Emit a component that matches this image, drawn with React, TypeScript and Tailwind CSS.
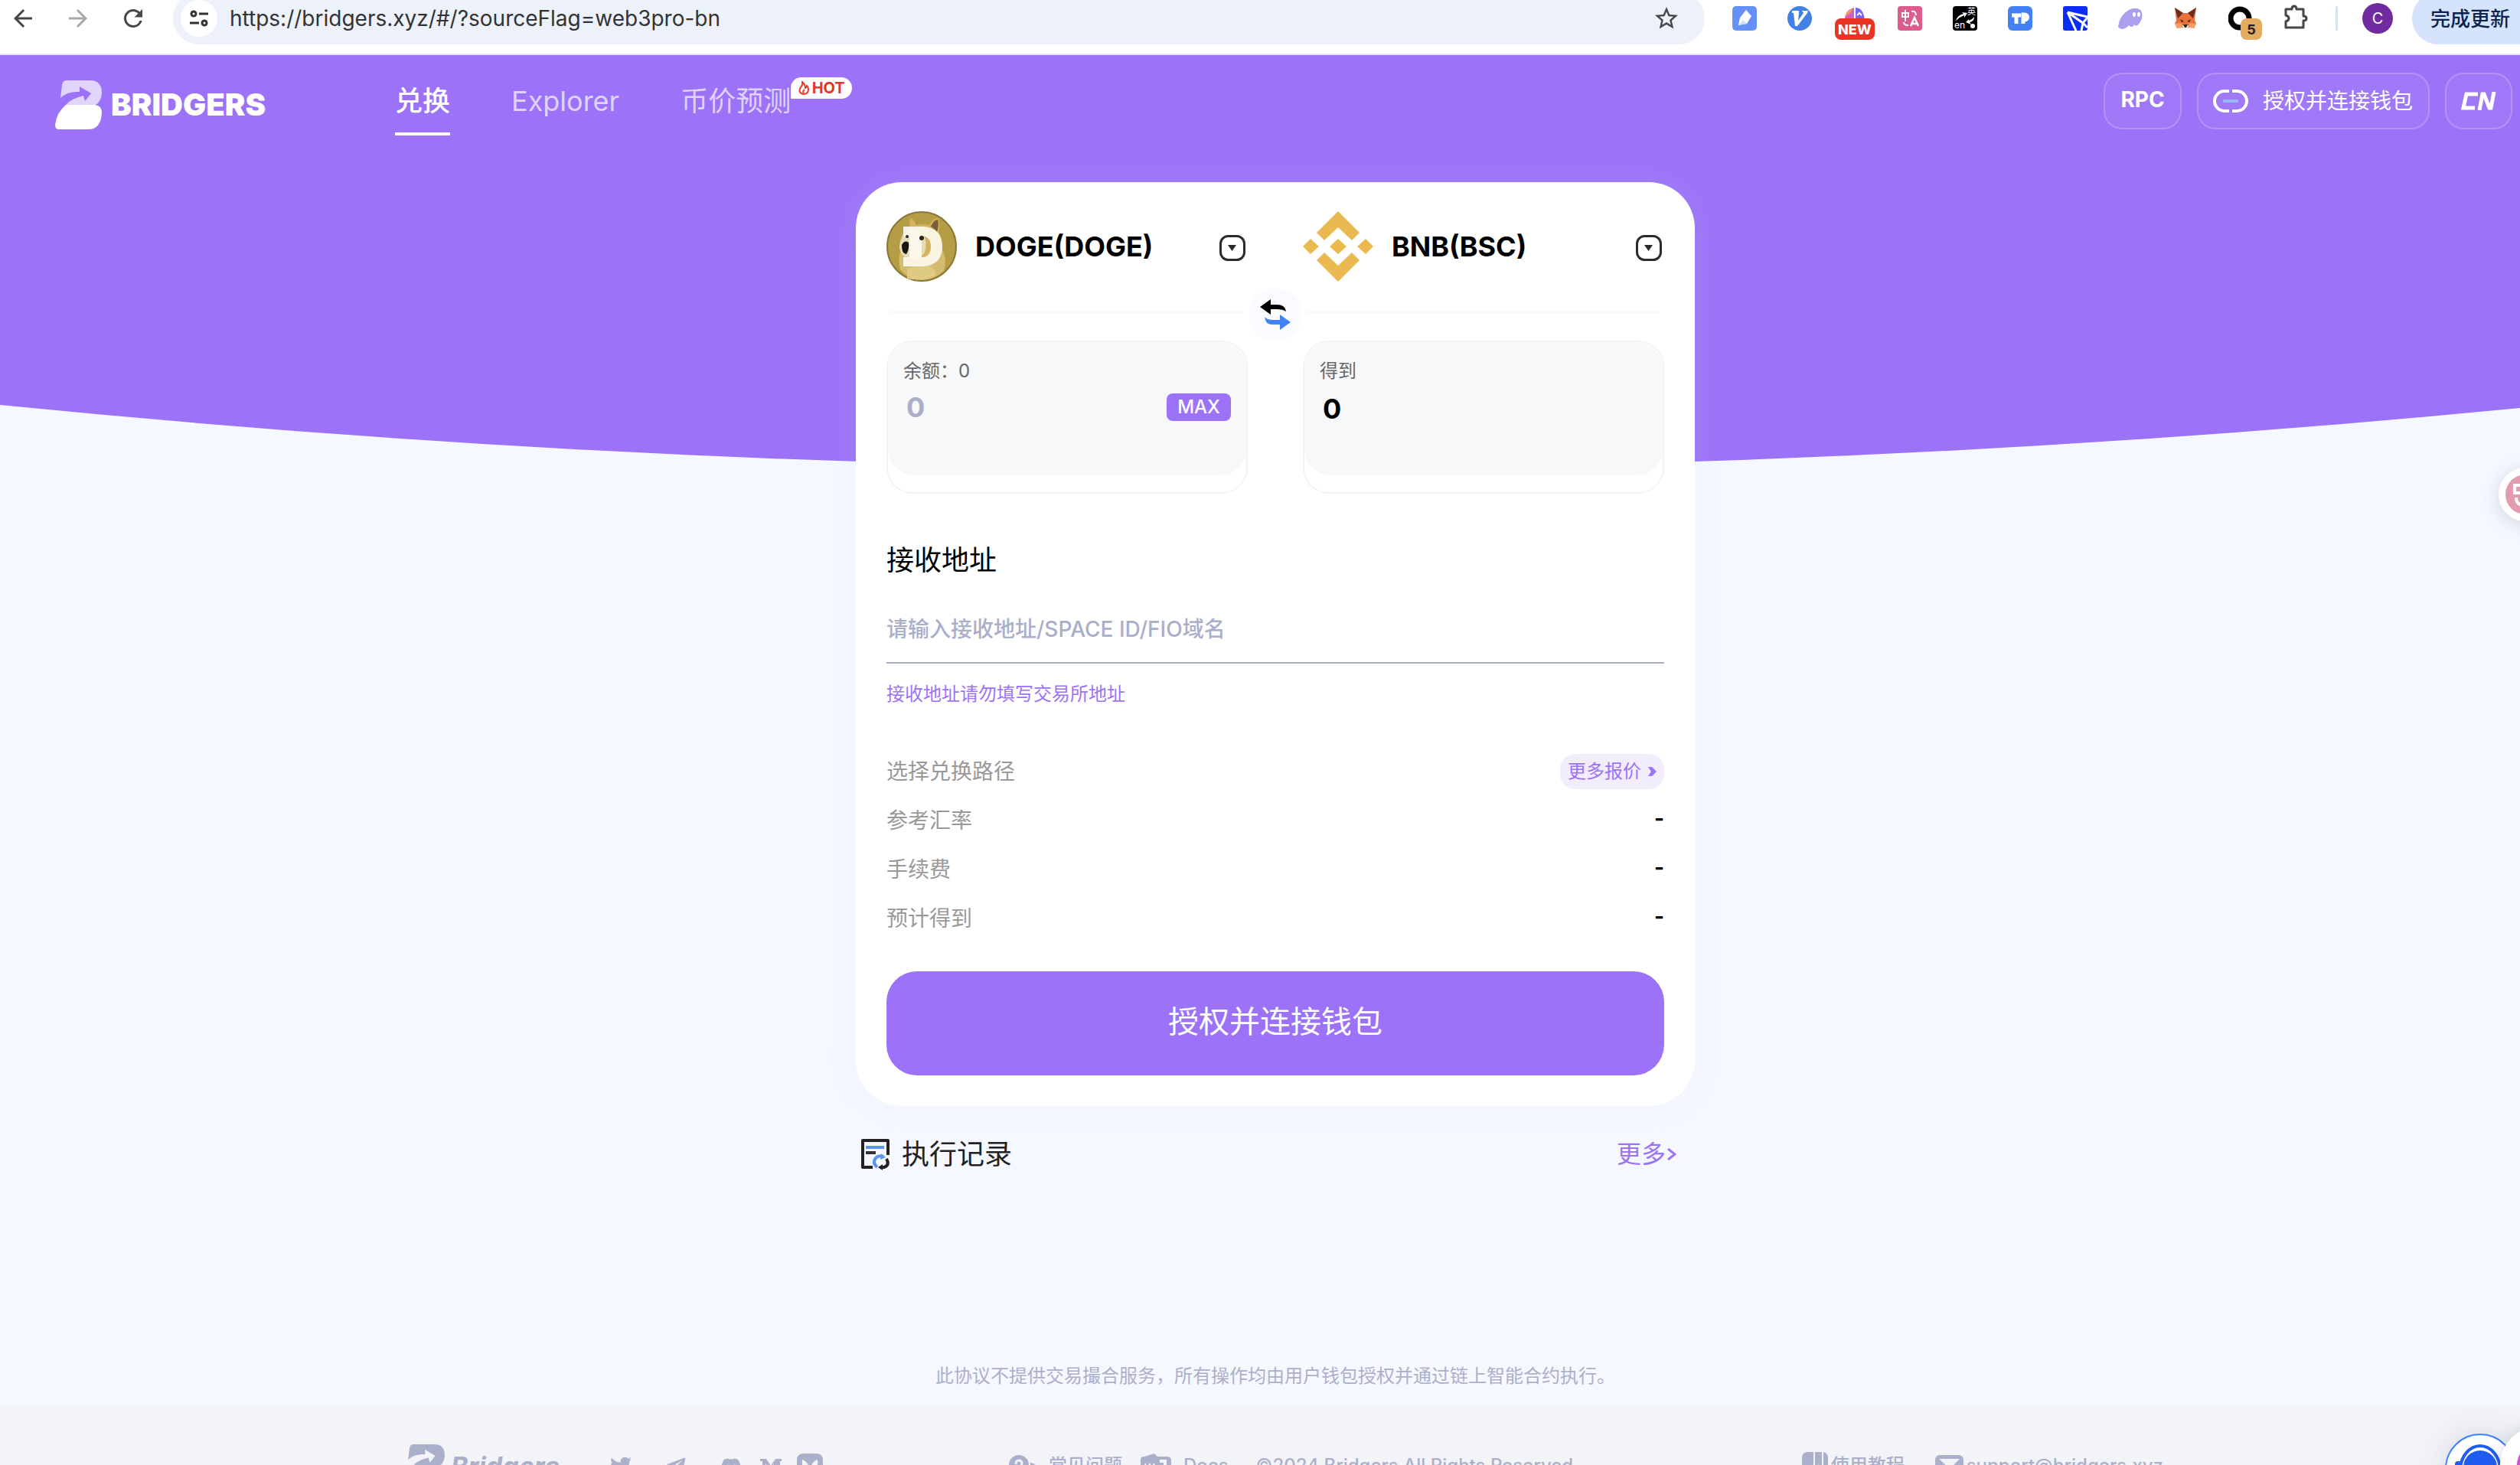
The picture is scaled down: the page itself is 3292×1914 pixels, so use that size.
import React from 'react';
import { MdArrowBack, MdArrowForward, MdRefresh, MdStarBorder } from 'react-icons/md';
import { FaTwitter, FaTelegramPlane } from 'react-icons/fa';
import { FaDiscord } from 'react-icons/fa6';

const BrandMark: React.FC<{ className?: string; topOpacity?: number }> = ({ className, topOpacity = 1 }) => (
    <svg viewBox="0 0 61 64" className={className} fill="currentColor" preserveAspectRatio="none" aria-hidden="true">
        <path
            opacity={topOpacity}
            d="M15 0H46Q61 0 61 17Q60 28 53 32H14Q20 24 37 20L39 27L47 17L32 8V15Q16 14 7 23L9 6Q10 0 15 0Z"
        />
        <path d="M14 32H52Q61 33 61 42Q60 64 43 64H5Q0 64 0 58Q2 42 14 32Z" />
    </svg>
);

const DogeIcon = () => (
    <svg viewBox="0 0 92 92" className="size-[92px]" aria-hidden="true">
        <circle cx="46" cy="46" r="45" fill="#b59d45" stroke="#8a7838" strokeWidth="2" />
        <path d="M18 76Q14 60 20 50L72 48Q80 62 75 78Q62 90 46 90Q30 90 18 76Z" fill="#d3bc70" />
        <path d="M27 88V76Q34 74 40 62L56 70Q66 78 64 84Q50 92 27 88Z" fill="#dfca84" />
        <path d="M17 46Q18 28 30 20L31 9Q36 10 39 18Q48 16 56 18Q60 10 67 9Q71 16 68 28Q76 44 70 58Q60 72 40 68Q18 66 17 46Z" fill="#d6b25f" />
        <path d="M58 20Q62 11 67 11Q69 18 66 27Q62 22 58 20Z" fill="#7a5f3a" />
        <path d="M17 46Q18 32 30 24Q40 22 48 30Q54 40 50 54Q42 64 30 62Q18 60 17 46Z" fill="#e6dbb8" />
        <path
            fillRule="evenodd"
            d="M22 20H48Q73 22 73 46Q73 70 48 72H22V60H30V33H22ZM46 32V60Q58 60 58 46Q58 33 46 32Z"
            fill="#fdfaf0"
            fillOpacity="0.9"
        />
        <path d="M20 44Q24 37 29 41Q30 50 26 56Q20 56 20 44Z" fill="#17150f" />
        <circle cx="46" cy="35" r="3" fill="#2b2618" />
        <circle cx="27" cy="33" r="2" fill="#2b2618" />
    </svg>
);

const BnbIcon = () => (
    <svg viewBox="0 0 92 92" className="size-[92px]" fill="#eaba50" aria-hidden="true">
        <path d="M46 0L74 28L64 38L46 21L28 38L18 28Z" />
        <path d="M46 92L74 64L64 54L46 71L28 54L18 64Z" />
        <path d="M0 46L10 36L21 46L10 56Z" />
        <path d="M35 46L46 36L57 46L46 56Z" />
        <path d="M71 46L82 36L92 46L82 56Z" />
    </svg>
);

const DropIcon = () => (
    <svg viewBox="0 0 34 34" className="size-[34px]" aria-hidden="true">
        <rect x="1.5" y="1.5" width="31" height="31" rx="10" fill="none" stroke="#2b2b2b" strokeWidth="3" />
        <path d="M11 13H22L16.5 21Z" fill="#2b2b2b" />
    </svg>
);

const SwapIcon = () => (
    <svg viewBox="0 0 40 40" className="size-10" aria-hidden="true">
        <path d="M0 10L14 0V7H22Q33 7 34 16Q30 13 22 13H14V20Z" fill="#000" />
        <path d="M40 30L26 20V27H18Q9 27 6 23Q7 33 16 33H26V40Z" fill="#3f83f8" />
    </svg>
);

const RecordIcon = () => (
    <svg viewBox="0 0 38 42" className="h-[42px] w-[38px]" fill="none" aria-hidden="true">
        <path d="M36 22V3H3V38H16" stroke="#222" strokeWidth="4" strokeLinejoin="round" />
        <path d="M7 12H31" stroke="#5b94f5" strokeWidth="4" />
        <path d="M7 19H20" stroke="#333" strokeWidth="4" />
        <path d="M22 38Q15 32 20 26Q24 22 30 24" stroke="#5b94f5" strokeWidth="4" />
        <path d="M27 20L33 25L26 28Z" fill="#5b94f5" />
        <path d="M34 27Q38 34 33 37Q30 39 26 38" stroke="#222" strokeWidth="4" />
        <path d="M29 42L23 38L29 34Z" fill="#222" />
    </svg>
);

const LinkIcon = () => (
    <svg viewBox="0 0 48 32" className="h-8 w-12" fill="none" aria-hidden="true">
        <path d="M22 3H16A13 13 0 0 0 16 29H22M26 3H32A13 13 0 0 1 32 29H26" stroke="#fff" strokeWidth="4" />
        <path d="M14 16H34" stroke="#92b8fb" strokeWidth="4" />
    </svg>
);

const PuzzleIcon = () => (
    <svg viewBox="0 0 32 34" className="h-[34px] w-8 shrink-0" fill="none" aria-hidden="true">
        <path
            d="M3 7H11Q11 3 14 3Q17 3 17 7H26V16Q30 16 30 19Q30 22 26 22V31H3V23Q7 22 7 19Q7 16 3 15Z"
            stroke="#474747"
            strokeWidth="3"
            strokeLinejoin="round"
        />
    </svg>
);

const extensions = [
    {
        name: 'Notes',
        icon: (
            <>
                <rect width="32" height="32" rx="5" fill="#6590f8" />
                <path d="M8 25L10 15L18 5L25 13L19 23Z" fill="#fff" />
                <path d="M8 25L19 23L14 18Z" fill="#cfddfd" />
            </>
        ),
    },
    {
        name: 'Vimium',
        icon: (
            <>
                <circle cx="16" cy="16" r="16" fill="#4381e6" />
                <path d="M6 6H15V9L14 19L21 9L19 6H27L26 9L13 26H10L8 9H6Z" fill="#fff" />
            </>
        ),
    },
    {
        name: 'Monica',
        badge: 'NEW',
        icon: (
            <>
                <path d="M3 18Q3 5 15 2V20H3Z" fill="#d65ac8" />
                <path d="M17 2Q27 2 29 18H17Z" fill="#7b62ee" />
                <path d="M3 14Q6 5 14 3L10 9Z" fill="#f0a04b" />
                <path d="M19 12L22 9L25 12" stroke="#fff" strokeWidth="2" fill="none" />
            </>
        ),
    },
    {
        name: 'Translate',
        icon: (
            <>
                <rect width="32" height="32" rx="4" fill="#dc5c8c" />
                <path d="M6 9H14V14H6ZM10 5V20M18 7Q24 6 24 12M8 21Q8 25 14 25" stroke="#fff" strokeWidth="2" fill="none" />
                <path d="M17 26L22 15L27 26M19 23H25" stroke="#fff" strokeWidth="2.5" fill="none" />
            </>
        ),
    },
    {
        name: 'English',
        icon: (
            <>
                <rect width="32" height="32" rx="4" fill="#000" />
                <path d="M4 19Q6 12 14 10L12 8L19 9L15 15V12Q9 14 4 19Z" fill="#fff" />
                <path d="M28 14Q28 20 22 21L24 24L17 21L21 17V19Q25 18 28 14Z" fill="#fff" />
                <circle cx="26" cy="26" r="3" fill="#fff" />
                <text x="2" y="29" fontSize="12" fill="#fff">en</text>
                <text x="19" y="11" fontSize="11" fill="#fff">英</text>
            </>
        ),
    },
    {
        name: 'TokenPocket',
        icon: (
            <>
                <rect width="32" height="32" rx="6" fill="#4581f6" />
                <path d="M5 12H17M11 11V23M20 23V11H22A3 3 0 0 1 22 18H20" stroke="#fff" strokeWidth="5" fill="none" />
            </>
        ),
    },
    {
        name: 'TronLink',
        icon: (
            <>
                <rect width="32" height="32" rx="3" fill="#0a2cf5" />
                <path d="M6 8L32 14M6 8L26 22M6 8L17 32M26 22L32 15M26 22L24 32M26 22L32 28" stroke="#fff" strokeWidth="3" fill="none" />
            </>
        ),
    },
    {
        name: 'Phantom',
        icon: (
            <>
                <path d="M0 26Q2 12 14 5Q24 0 30 6Q34 14 28 22Q24 28 21 24Q18 30 14 25Q8 32 2 29Q0 28 0 26Z" fill="#ab9fee" />
                <ellipse cx="21" cy="11" rx="2" ry="3" fill="#fff" />
                <ellipse cx="27" cy="11" rx="2" ry="3" fill="#fff" />
            </>
        ),
    },
    {
        name: 'MetaMask',
        icon: (
            <>
                <path d="M2 2L13 9H19L30 2L28 18L30 23L27 29L21 27L16 30L11 27L5 29L2 23L4 18Z" fill="#e8733a" />
                <path d="M2 2L13 9L6 16Z" fill="#6b2f20" />
                <path d="M30 2L19 9L26 16Z" fill="#6b2f20" />
                <path d="M2 23L10 22L13 28L5 29ZM30 23L22 22L19 28L27 29Z" fill="#f3a06b" />
                <path d="M12 25H20L18 30H14Z" fill="#eee" />
                <path d="M13 24H19L17 28H15Z" fill="#33261f" />
                <path d="M9 17L14 20L11 21ZM23 17L18 20L21 21Z" fill="#33261f" />
            </>
        ),
    },
    {
        name: 'OKX',
        badge: '5',
        icon: <circle cx="15" cy="16" r="12" fill="none" stroke="#000" strokeWidth="7" />,
    },
];

const BrowserBar = () => (
    <div className="h-[72px] shrink-0 overflow-hidden border-b-2 border-[#dfe3e1] bg-white">
        <div className="-mt-2.5 flex h-[68px] items-center pl-3">
            <div className="flex items-center gap-9 text-[36px] text-[#474747]">
                <button aria-label="Back"><MdArrowBack /></button>
                <button aria-label="Forward" className="text-[#a8a8a8]"><MdArrowForward /></button>
                <button aria-label="Reload"><MdRefresh /></button>
            </div>
            <div className="ml-[34px] flex h-full flex-1 items-center rounded-full bg-[#edf1f9] pl-2.5 pr-8">
                <button aria-label="Site information" className="flex size-12 items-center justify-center rounded-full bg-white">
                    <svg viewBox="0 0 24 24" className="size-6" fill="none" stroke="#333" strokeWidth="3">
                        <circle cx="5" cy="6" r="3" />
                        <path d="M12 6H24M0 18H12" />
                        <circle cx="19" cy="18" r="3" />
                    </svg>
                </button>
                <input
                    aria-label="Address"
                    className="ml-4 flex-1 text-[28px] text-[#333] outline-none"
                    defaultValue="https://bridgers.xyz/#/?sourceFlag=web3pro-bn"
                />
                <button aria-label="Bookmark" className="text-[36px] text-[#474747]"><MdStarBorder /></button>
            </div>
            <div className="flex items-center gap-10 pl-9">
                {extensions.map((ext) => (
                    <button key={ext.name} aria-label={ext.name} className="relative size-8">
                        <svg viewBox="0 0 32 32" className="size-8">{ext.icon}</svg>
                        {ext.badge === 'NEW' && (
                            <span className="absolute -left-2.5 top-4 flex h-7 w-[52px] items-center justify-center rounded-lg bg-[#ea3323] text-[18px] font-extrabold text-white">NEW</span>
                        )}
                        {ext.badge === '5' && (
                            <span className="absolute left-4 top-4 flex h-7 w-7 items-center justify-center rounded-lg bg-[#e4ac60] text-[18px] font-bold text-[#222]">5</span>
                        )}
                    </button>
                ))}
                <button aria-label="Extensions" className="flex size-8 items-center justify-center pb-1">
                    <PuzzleIcon />
                </button>
            </div>
            <span className="ml-9 h-8 w-[3px] rounded bg-[#d3e2fb]" />
            <button className="ml-8 size-10 rounded-full bg-[#6f2b9f] text-[20px] text-white">C</button>
            <button className="ml-[25px] h-full w-[141px] overflow-hidden whitespace-nowrap rounded-l-full bg-[#d5e3fc] pl-6 text-left text-[26px] font-medium text-[#0b2350]">
                完成更新
            </button>
        </div>
    </div>
);

const Header = () => (
    <header className="relative flex h-[166px] items-start pl-[72px] pr-2.5 pt-[23px] text-white">
        <a href="#home" aria-label="Bridgers home" className="mt-2.5 flex w-[444px] items-center gap-3">
            <BrandMark className="h-16 w-[61px]" topOpacity={0.7} />
            <span className="text-[40px] font-black leading-[64px]">BRIDGERS</span>
        </a>
        <nav className="flex h-[74px] items-center gap-20 text-[36px] leading-[54px] text-white/70">
            <a href="#swap" className="relative font-medium text-white after:absolute after:-bottom-[18px] after:left-0 after:h-1 after:w-full after:bg-white">
                兑换
            </a>
            <a href="#explorer">Explorer</a>
            <a href="#predict" className="relative">
                币价预测
                <span className="absolute -top-1 left-full flex h-7 w-20 items-center justify-center gap-1 rounded-full rounded-bl-none bg-white text-[20px] font-bold text-[#e8352a]">
                    <svg viewBox="0 0 14 18" className="h-[18px] w-3.5" fill="none" stroke="#e8352a" strokeWidth="2" aria-hidden="true">
                        <path d="M5 1Q6 5 3 8Q-1 15 6 17Q13 17 13 11Q13 8 11 6Q10 9 9 9Q9 4 5 1Z" />
                        <path d="M8 11Q5 13 7 16" />
                    </svg>
                    HOT
                </span>
            </a>
        </nav>
        <div className="ml-auto flex gap-5 text-[28px]">
            <button className="h-[74px] w-[102px] rounded-3xl border-2 border-white/20 bg-white/5 pb-1 font-bold">RPC</button>
            <button className="flex h-[74px] w-[304px] items-center gap-[18px] rounded-3xl border-2 border-white/20 bg-white/5 pl-[18px]">
                <LinkIcon />
                授权并连接钱包
            </button>
            <button aria-label="CN" className="flex h-[74px] w-[88px] items-center justify-center rounded-3xl border-2 border-white/20 bg-white/5">
                <svg viewBox="0 0 46 24" className="h-6 w-[46px]" fill="none" stroke="#fff" strokeWidth="5" aria-hidden="true">
                    <path d="M22 3H7L3 21H18M24 24L28 3H30L37 21H39L43 0" />
                </svg>
            </button>
        </div>
    </header>
);

const tokens = [
    { name: 'DOGE(DOGE)', icon: <DogeIcon /> },
    { name: 'BNB(BSC)', icon: <BnbIcon /> },
];

const SwapCard = () => (
    <section className="rounded-[60px] bg-white px-10 pb-10 pt-[38px] shadow-[0_0_50px_rgba(214,230,250,0.15)]">
        <div className="relative grid grid-cols-2 gap-[72px]">
            {tokens.map((token) => (
                <div key={token.name}>
                    <button className="flex w-full items-center text-[36px] font-bold text-black">
                        {token.icon}
                        <span className="ml-6 flex-1 text-left leading-[92px]">{token.name}</span>
                        <span className="mr-[3px] mt-1"><DropIcon /></span>
                    </button>
                    <div className="mx-[5px] mt-[38px] h-1 bg-[#f9fafe]" />
                </div>
            ))}
            <button aria-label="Swap tokens" className="absolute left-1/2 top-[101px] flex size-[68px] -translate-x-1/2 items-center justify-center rounded-[30px] bg-[#fafbff]">
                <SwapIcon />
            </button>
        </div>

        <div className="mt-[35px] grid grid-cols-2 gap-[72px]">
            <div className="h-[200px] rounded-[34px] border-2 border-[#f3f3fa]">
                <div className="h-[174px] rounded-[34px] bg-[#f7f8fa] px-5 pt-5">
                    <label htmlFor="amount" className="block text-[24px] leading-9 text-[#666]">余额：0</label>
                    <div className="mt-1 flex items-center justify-between">
                        <input id="amount" placeholder="0" className="w-60 pl-1 text-[36px] font-bold leading-[50px] text-black outline-none placeholder:text-[#a9aec9]" />
                        <button className="h-9 w-[84px] rounded-lg bg-[#9b72f8] text-[24px] font-medium leading-9 text-white">MAX</button>
                    </div>
                </div>
            </div>
            <div className="h-[200px] rounded-[34px] border-2 border-[#f3f3fa]">
                <div className="h-[174px] rounded-[34px] bg-[#f7f8fa] px-5 pt-5">
                    <p className="text-[24px] leading-9 text-[#666]">得到</p>
                    <p className="mt-1 pl-1 text-[36px] font-bold leading-[54px] text-black">0</p>
                </div>
            </div>
        </div>

        <label htmlFor="address" className="mt-[60px] block text-[36px] leading-[54px] text-black">接收地址</label>
        <input
            id="address"
            placeholder="请输入接收地址/SPACE ID/FIO域名"
            className="mt-5 h-[88px] w-full border-b-2 border-[#a9aec9] text-[28px] font-medium outline-none placeholder:text-[#a9aec9]"
        />
        <p className="mt-[22px] text-[24px] leading-9 text-[#9b72f8]">接收地址请勿填写交易所地址</p>

        <dl className="mt-[51px] text-[28px] leading-[64px] text-[#999]">
            <div className="flex items-center justify-between">
                <dt>选择兑换路径</dt>
                <dd className="flex">
                    <button className="flex h-[46px] items-center gap-2 rounded-[20px] bg-[#f2edfd] px-2.5 text-[24px] leading-9 text-[#9b72f8]">
                        更多报价
                        <svg viewBox="0 0 12 12" className="size-3" fill="#9b72f8" aria-hidden="true">
                            <path d="M1 0H6L12 6L6 12H1L5 6Z" />
                        </svg>
                    </button>
                </dd>
            </div>
            {['参考汇率', '手续费', '预计得到'].map((label) => (
                <div key={label} className="flex h-16 items-center justify-between">
                    <dt>{label}</dt>
                    <dd className="pb-1.5 font-bold text-black">-</dd>
                </div>
            ))}
        </dl>

        <button className="mt-[37px] h-[136px] w-full rounded-[40px] bg-[#9b72f8] pb-1 text-[40px] text-white">授权并连接钱包</button>
    </section>
);

const Footer = () => (
    <footer className="flex-1 bg-[#f3f4f8] pl-[527px] pr-[466px] pt-[50px] text-[24px] font-medium text-[#aab0ca]">
        <div className="flex h-14 items-center whitespace-nowrap">
            <div className="flex w-[548px] items-center">
                <BrandMark className="h-14 w-[54px]" />
                <span className="ml-2 text-[34px] font-bold italic">Bridgers</span>
                <div className="ml-auto flex items-center gap-11">
                    <a href="#twitter" aria-label="Twitter"><FaTwitter className="size-7" /></a>
                    <a href="#telegram" aria-label="Telegram"><FaTelegramPlane className="size-7" /></a>
                    <a href="#discord" aria-label="Discord"><FaDiscord className="size-7" /></a>
                </div>
                <a href="#medium" aria-label="Medium" className="ml-6">
                    <svg viewBox="0 0 28 18" className="h-[18px] w-7" fill="currentColor">
                        <path d="M0 0H8L14 9L20 0H28V3H26V18H18V6L13 15L7 6V15H9V18H0V15H3V3H0Z" />
                    </svg>
                </a>
                <a href="#community" aria-label="Community" className="ml-5">
                    <svg viewBox="0 0 34 32" className="h-8 w-[34px]">
                        <rect width="34" height="32" rx="8" fill="currentColor" />
                        <path d="M7 8Q14 10 17 20Q20 10 27 8Q28 14 25 24H9Q6 14 7 8Z" fill="#f3f4f8" />
                    </svg>
                </a>
            </div>
            <div className="ml-[243px] flex items-center">
                <a href="#faq" className="flex items-center gap-3.5">
                    <svg viewBox="0 0 38 32" className="h-8 w-[38px]" aria-hidden="true">
                        <circle cx="28" cy="21" r="9" fill="currentColor" />
                        <circle cx="13" cy="15" r="14" fill="currentColor" stroke="#f3f4f8" strokeWidth="2" />
                        <path d="M9 14Q9 9 13 9Q17 9 17 13Q17 15 13 18V22" stroke="#f3f4f8" strokeWidth="3" fill="none" />
                    </svg>
                    常见问题
                </a>
                <a href="#docs" className="ml-6 flex items-center gap-4">
                    <svg viewBox="0 0 40 32" className="h-8 w-10" aria-hidden="true">
                        <path d="M0 8Q0 4 5 4L18 0L22 4H34Q40 4 40 9V28H0Z" fill="currentColor" />
                        <path d="M25 8H34V22H25V18H30V12H25Z" fill="#f3f4f8" />
                        <path d="M6 13L8 20L12 14L15 20L18 13" stroke="#f3f4f8" strokeWidth="2" fill="none" />
                    </svg>
                    Docs
                </a>
                <span className="ml-9">©2024 Bridgers All Rights Reserved.</span>
            </div>
            <div className="ml-auto flex items-center gap-10">
                <a href="#guide" className="flex items-center gap-1">
                    <svg viewBox="0 0 34 36" className="h-9 w-[34px]" aria-hidden="true">
                        <rect width="34" height="36" rx="7" fill="currentColor" />
                        <path d="M15 0H17V36H15ZM26 0H28V36H26ZM18 22L21 16L25 22V36H18Z" fill="#f3f4f8" />
                    </svg>
                    使用教程
                </a>
                <a href="mailto:support@bridgers.xyz" className="flex items-center gap-1">
                    <svg viewBox="0 0 37 28" className="h-7 w-[37px]" aria-hidden="true">
                        <rect width="37" height="28" rx="6" fill="currentColor" />
                        <path d="M5 5H32L19 18Z" fill="#f3f4f8" />
                    </svg>
                    support@bridgers.xyz
                </a>
            </div>
        </div>
    </footer>
);

const FloatingTools = () => (
    <>
        <button aria-label="Translate page" className="absolute -right-[42px] top-[611px] flex size-[70px] items-center justify-center rounded-full bg-white shadow-[0_4px_24px_rgba(60,70,110,0.2)]">
            <svg viewBox="0 0 52 52" className="size-[52px]" fill="none">
                <circle cx="26" cy="26" r="26" fill="#e39bb0" />
                <path d="M24 14H12V24H24M14 30Q14 40 24 40" stroke="#fff" strokeWidth="4" />
            </svg>
        </button>
        <button aria-label="Customer service" className="absolute -bottom-[51px] right-1.5 size-[92px] rounded-full border-2 border-[#3f83f8] bg-white shadow-[0_0_40px_rgba(60,70,110,0.15)]">
            <svg viewBox="0 0 88 88" className="size-[88px]" fill="none">
                <circle cx="44" cy="42" r="22" fill="#1f5cf0" />
                <path d="M18 46A26 32 0 0 1 70 46" stroke="#1f5cf0" strokeWidth="4" />
                <rect x="11" y="34" width="9" height="24" rx="4" fill="#1f5cf0" />
                <rect x="68" y="34" width="9" height="24" rx="4" fill="#1f5cf0" />
            </svg>
        </button>
        <button aria-label="Assistant" className="absolute -bottom-[50px] -right-[74px] flex size-[100px] items-center rounded-full bg-white pl-[22px] shadow-[0_0_20px_rgba(60,70,110,0.2)]">
            <svg viewBox="0 0 56 56" className="size-14">
                <circle cx="28" cy="28" r="28" fill="#d64fd0" />
            </svg>
        </button>
    </>
);

const App: React.FC = () => {
    return (
        <div className="relative flex h-screen flex-col overflow-hidden bg-[#f5f8ff] font-['Inter','Noto_Sans_CJK_SC',sans-serif]">
            <BrowserBar />
            <div className="relative flex flex-1 flex-col">
                <svg viewBox="0 0 3332 540" preserveAspectRatio="none" className="absolute left-0 top-0 h-[540px] w-[calc(100%+40px)]" aria-hidden="true">
                    <path d="M0 0H3332V457Q1666 623 0 457Z" fill="#9b72f8" />
                </svg>
                <Header />
                <main className="relative ml-10 flex flex-col items-center">
                    <div className="w-[1096px]">
                        <SwapCard />
                        <div className="mt-9 flex items-center justify-between pl-1.5 pr-6">
                            <h2 className="flex items-center gap-4 text-[36px] leading-[54px] text-[#222]">
                                <RecordIcon />
                                执行记录
                            </h2>
                            <a href="#records" className="flex items-center gap-0.5 text-[32px] text-[#9b72f8]">
                                更多
                                <svg viewBox="0 0 12 16" className="h-4 w-3" fill="none" stroke="#9b72f8" strokeWidth="3" aria-hidden="true">
                                    <path d="M1 1L10 8L1 15" />
                                </svg>
                            </a>
                        </div>
                    </div>
                    <p className="mb-[21px] mt-[245px] text-[24px] leading-9 text-[#aab0ca]">
                        此协议不提供交易撮合服务，所有操作均由用户钱包授权并通过链上智能合约执行。
                    </p>
                </main>
                <Footer />
            </div>
            <FloatingTools />
        </div>
    );
};

export default App;
